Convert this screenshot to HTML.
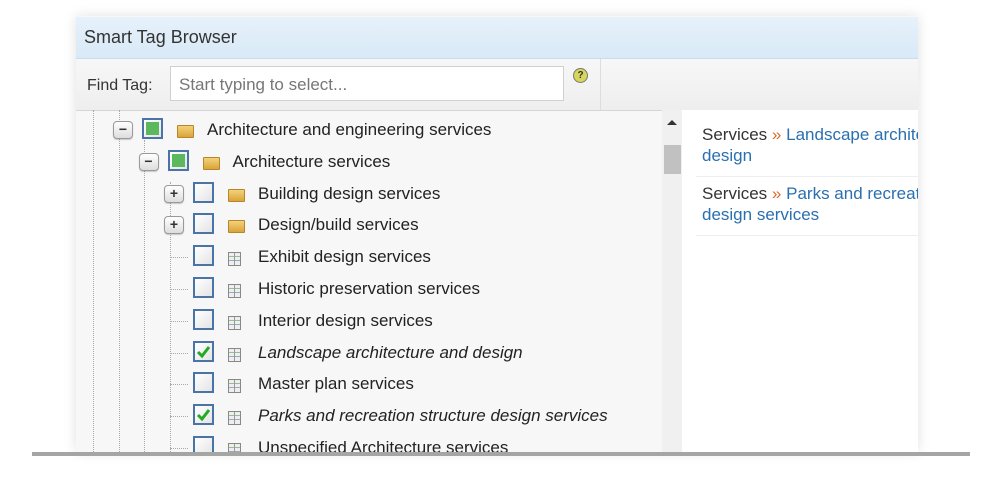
<!DOCTYPE html><html><head><style>
body{margin:0;width:1004px;height:495px;background:#fff;position:relative;overflow:hidden;font-family:"Liberation Sans",sans-serif}
.a{position:absolute}
#panel{left:76px;top:16px;width:842px;height:436px;background:#f7f7f7;box-shadow:0 0 12px rgba(0,0,0,.12);overflow:hidden}
.hdr{left:0;top:1px;width:842px;height:42px;background:linear-gradient(#e6f1fb,#d9e9f7);border-bottom:1px solid #c9dcee;color:#333;font-size:18px;line-height:40px;padding-left:8px;box-sizing:border-box}
.find{left:0;top:43px;width:842px;height:51px;background:linear-gradient(#f7f7f7,#eeeeee);border-bottom:1px solid #d6d6d6}
.vl{border-left:1px dotted #aaa;width:0}
.hl{border-top:1px dotted #aaa;height:0}
.exp{width:18px;height:16px;border:1px solid #999;border-radius:4px;background:linear-gradient(#fff,#ddd);box-shadow:0 1px 1px rgba(0,0,0,.2);font-size:14px;line-height:15px;text-align:center;color:#333;font-weight:bold}
.cb{width:17px;height:17px;border:2px solid #4a74a8;background:linear-gradient(135deg,#fff,#e4e4e4)}
.cb.g::after{content:"";position:absolute;left:2px;top:2px;width:13px;height:13px;background:#5cb85c}
.fold{width:15px;height:11px;background:linear-gradient(#f4d27a,#d9a43a);border:1px solid #b8862a;border-radius:1px}
.grid{width:11px;height:12px;border:1px solid #888;background:#eee;background-image:linear-gradient(90deg,transparent 5px,#999 5px,#999 6px,transparent 6px),linear-gradient(transparent 3px,#9b9 3px,#9b9 4px,transparent 4px,transparent 7px,#9ab 7px,#9ab 8px,transparent 8px)}
.t{font-size:17px;color:#222;white-space:nowrap}
.r{font-size:17px;color:#333;line-height:21px;white-space:nowrap}
.r span{color:#2a6fb0}.r b{color:#e06b2c;font-weight:normal}
</style></head><body>
<div class="a" id="panel">
<div class="a hdr">Smart Tag Browser</div>
<div class="a find">
<div class="a" style="left:11px;top:18px;font-size:16px;color:#333">Find Tag:</div>
<div class="a" style="left:94px;top:7px;width:394px;height:35px;background:#fff;border:1px solid #d0d0d0;box-sizing:border-box;font-size:17px;color:#777;line-height:36px;padding-left:8px">Start typing to select...</div>
<div class="a" style="left:497px;top:9px;width:13px;height:13px;border-radius:50%;background:#d6d65a;border:1px solid #777;font-size:10px;line-height:13px;text-align:center;color:#333;font-weight:bold">?</div>
<div class="a" style="left:524px;top:0;width:1px;height:51px;background:#ddd"></div>
</div>
<div class="a" style="left:586px;top:94px;width:20px;height:342px;background:#f0f0f0"></div>
<div class="a" style="left:591px;top:104px;width:0;height:0;border-left:5px solid transparent;border-right:5px solid transparent;border-bottom:5px solid #333"></div>
<div class="a" style="left:588px;top:129px;width:17px;height:29px;background:#c1c1c1"></div>
<div class="a" style="left:606px;top:94px;width:236px;height:342px;background:#fff"></div>
<div class="a r" style="left:626px;top:108px">Services <b>»</b> <span>Landscape architecture and</span><br><span>design</span></div>
<div class="a" style="left:620px;top:160px;width:222px;height:1px;background:#eee"></div>
<div class="a r" style="left:626px;top:167px">Services <b>»</b> <span>Parks and recreation structure</span><br><span>design services</span></div>
<div class="a" style="left:620px;top:219px;width:222px;height:1px;background:#eee"></div>
</div>
<div class="a" style="left:76px;top:110px;width:586px;height:342px;overflow:hidden">
<div class="a vl" style="left:17px;top:0;height:342px"></div>
<div class="a vl" style="left:43px;top:0;height:342px"></div>
<div class="a vl" style="left:68px;top:30px;height:312px"></div>
<div class="a vl" style="left:94px;top:72px;height:270px"></div>
</div>
<div id="rows"></div>
<script>
var rows=[[1,'-','g',1,'Architecture and engineering services',0],[2,'-','g',1,'Architecture services',0],[3,'+','',1,'Building design services',0],[3,'+','',1,'Design/build services',0],[3,'','',0,'Exhibit design services',0],[3,'','',0,'Historic preservation services',0],[3,'','',0,'Interior design services',0],[3,'','c',0,'Landscape architecture and design',1],[3,'','',0,'Master plan services',0],[3,'','c',0,'Parks and recreation structure design services',1],[3,'','',0,'Unspecified Architecture services',0]];
var h='';
rows.forEach(function(r,i){var y=120+i*31.8,dx=(r[0]-1)*25.5;
if(r[1])h+='<div class="a exp" style="left:'+(113+dx)+'px;top:'+(y+1)+'px">'+(r[1]=='-'?'−':'+')+'</div>';
else h+='<div class="a hl" style="left:'+(170)+'px;top:'+(y+10)+'px;width:18px"></div>';
h+='<div class="a cb '+(r[2]=='g'?'g':'')+'" style="left:'+(142+dx)+'px;top:'+(y-2)+'px">'+(r[2]=='c'?'<svg width="17" height="17" style="position:absolute"><path d="M3 9 L7 13 L14 4" stroke="#2a2" stroke-width="3" fill="none"/></svg>':'')+'</div>';
h+='<div class="a '+(r[3]?'fold':'grid')+'" style="left:'+(177+dx)+'px;top:'+(y+5)+'px"></div>';
h+='<div class="a t" style="left:'+(207+dx)+'px;top:'+(y)+'px;'+(r[5]?'font-style:italic':'')+'">'+r[4]+'</div>';});
document.getElementById('rows').innerHTML='<div class="a" style="left:0;top:110px;width:662px;height:342px;overflow:hidden"><div class="a" style="left:0;top:-110px;width:662px;height:452px">'+h+'</div></div>';
</script>
<div class="a" style="left:32px;top:452px;width:938px;height:4px;background:#a3a6a3"></div>
</body></html>
